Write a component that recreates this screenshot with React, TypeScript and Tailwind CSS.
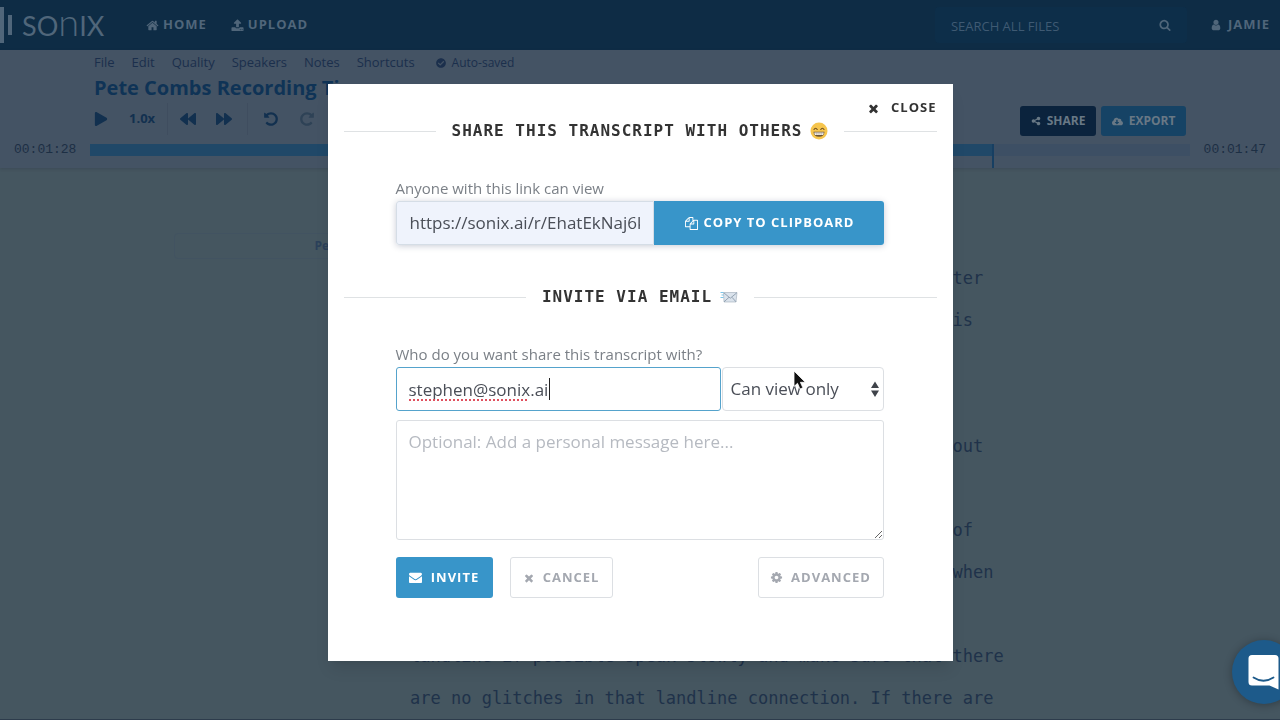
import type { ReactNode } from "react";
import { FaBackward, FaCheckCircle, FaCloudDownloadAlt, FaForward, FaPlay } from "react-icons/fa";

const paths = {
  home: "M1472 992v480q0 26-19 45t-45 19h-384v-384h-256v384h-384q-26 0-45-19t-19-45v-480q0-1 .5-3t.5-3l575-474 575 474q1 2 1 6zm223-69l-62 74q-8 9-21 11h-3q-13 0-21-7l-692-577-692 577q-12 8-24 7-13-2-21-11l-62-74q-8-10-7-23.5t11-21.5l719-599q32-26 76-26t76 26l244 204v-195q0-14 9-23t23-9h192q14 0 23 9t9 23v408l219 182q10 8 11 21.5t-7 23.5z",
  upload:
    "M1344 1472q0-26-19-45t-45-19-45 19-19 45 19 45 45 19 45-19 19-45zm256 0q0-26-19-45t-45-19-45 19-19 45 19 45 45 19 45-19 19-45zm128-224v320q0 40-28 68t-68 28h-1472q-40 0-68-28t-28-68v-320q0-40 28-68t68-28h427q21 56 70.5 92t110.5 36h256q61 0 110.5-36t70.5-92h427q40 0 68 28t28 68zm-325-648q-17 40-59 40h-256v448q0 26-19 45t-45 19h-256q-26 0-45-19t-19-45v-448h-256q-42 0-59-40-17-39 14-69l448-448q18-19 45-19t45 19l448 448q31 30 14 69z",
  search:
    "M1216 832q0-185-131.5-316.5t-316.5-131.5-316.5 131.5-131.5 316.5 131.5 316.5 316.5 131.5 316.5-131.5 131.5-316.5zm512 832q0 52-38 90t-90 38q-54 0-90-38l-343-342q-179 124-399 124-143 0-273.5-55.5t-225-150-150-225-55.5-273.5 55.5-273.5 150-225 225-150 273.5-55.5 273.5 55.5 225 150 150 225 55.5 273.5q0 220-124 399l343 343q37 37 37 90z",
  user: "M1536 1399q0 109-62.5 187t-150.5 78h-854q-88 0-150.5-78t-62.5-187q0-85 8.5-160.5t31.5-152 58.5-131 94-89 134.5-34.5q131 128 313 128t313-128q76 0 134.5 34.5t94 89 58.5 131 31.5 152 8.5 160.5zm-256-887q0 159-112.5 271.5t-271.5 112.5-271.5-112.5-112.5-271.5 112.5-271.5 271.5-112.5 271.5 112.5 112.5 271.5z",
  share:
    "M1344 1024q133 0 226.5 93.5t93.5 226.5-93.5 226.5-226.5 93.5-226.5-93.5-93.5-226.5q0-12 2-34l-360-180q-92 86-218 86-133 0-226.5-93.5t-93.5-226.5 93.5-226.5 226.5-93.5q126 0 218 86l360-180q-2-22-2-34 0-133 93.5-226.5t226.5-93.5 226.5 93.5 93.5 226.5-93.5 226.5-226.5 93.5q-126 0-218-86l-360 180q2 22 2 34t-2 34l360 180q92-86 218-86z",
  undo: "M1664 896q0 156-61 298t-164 245-245 164-298 61q-172 0-327-72.5t-264-204.5q-7-10-6.5-22.5t8.5-20.5l137-138q10-9 25-9 16 2 23 12 73 95 179 147t225 52q104 0 198.5-40.5t163.5-109.5 109.5-163.5 40.5-198.5-40.5-198.5-109.5-163.5-163.5-109.5-198.5-40.5q-98 0-188 35.5t-160 101.5l137 138q31 30 14 69-17 40-59 40h-448q-26 0-45-19t-19-45v-448q0-42 40-59 39-17 69 14l130 129q107-101 244.5-156.5t284.5-55.5q156 0 298 61t245 164 164 245 61 298z",
  times:
    "M1490 1322q0 40-28 68l-136 136q-28 28-68 28t-68-28l-294-294-294 294q-28 28-68 28t-68-28l-136-136q-28-28-28-68t28-68l294-294-294-294q-28-28-28-68t28-68l136-136q28-28 68-28t68 28l294 294 294-294q28-28 68-28t68 28l136 136q28 28 28 68t-28 68l-294 294 294 294q28 28 28 68z",
  files:
    "M1696 384q40 0 68 28t28 68v1216q0 40-28 68t-68 28h-960q-40 0-68-28t-28-68v-288h-544q-40 0-68-28t-28-68v-672q0-40 20-88t48-76l408-408q28-28 76-48t88-20h416q40 0 68 28t28 68v328q68-40 128-40h416zm-544 213l-299 299h299v-299zm-640-384l-299 299h299v-299zm196 647l316-316v-416h-384v416q0 40-28 68t-68 28h-416v640h512v-256q0-40 20-88t48-76zm956 804v-1152h-384v416q0 40-28 68t-68 28h-416v640h896z",
  envelope:
    "M1792 710v794q0 66-47 113t-113 47h-1472q-66 0-113-47t-47-113v-794q44 49 101 87 362 246 497 345 57 42 92.5 65.5t94.5 48 110 24.5h2q51 0 110-24.5t94.5-48 92.5-65.5q170-123 498-345 57-39 100-87zm0-294q0 79-49 151t-122 123q-376 261-468 325-10 7-42.5 31t-54 38.5-52 32.5-57.5 27-50 9h-2q-23 0-50-9t-57.5-27-52-32.5-54-38.5-42.5-31q-91-64-262-182.5t-205-142.5q-62-42-117-115.5t-55-136.5q0-78 41.5-130t118.5-52h1472q65 0 112.5 47t47.5 113z",
  cog: "M1152 896q0-106-75-181t-181-75-181 75-75 181 75 181 181 75 181-75 75-181zm512-109v222q0 12-8 23t-20 13l-185 28q-19 54-39 91 35 50 107 138 10 12 10 25t-9 23q-27 37-99 108t-94 71q-12 0-26-9l-138-108q-44 23-91 38-16 136-29 186-7 28-36 28h-222q-14 0-24.5-8.5t-11.5-21.5l-28-184q-49-16-90-37l-141 107q-10 9-25 9-14 0-25-11-126-114-165-168-7-10-7-23 0-12 8-23 15-21 51-66.5t54-70.5q-27-50-41-99l-183-27q-13-2-21-12.5t-8-23.5v-222q0-12 8-23t19-13l186-28q14-46 39-92-40-57-107-138-10-12-10-24 0-10 9-23 26-36 98.5-107.5t94.5-71.5q13 0 26 10l138 107q44-23 91-38 16-136 29-186 7-28 36-28h222q14 0 24.5 8.5t11.5 21.5l28 184q49 16 90 37l142-107q9-9 24-9 13 0 25 10 129 119 165 170 7 8 7 22 0 12-8 23-15 21-51 66.5t-54 70.5q26 50 41 98l183 28q13 2 21 12.5t8 23.5z",
};

function Icon({ name, className }: { name: keyof typeof paths; className: string }) {
  return (
    <svg viewBox="0 0 1792 1792" fill="currentColor" aria-hidden="true" className={`shrink-0 ${className}`}>
      <path d={paths[name]} />
    </svg>
  );
}

const transcript = [
  "Good morning everyone, today we are talking about better",
  "ways to record a phone interview. The first tip here is",
  "to get everyone on a good line.",
  "",
  "When you call somebody on the telephones you worry about",
  "noise, distance and the microphone they have.",
  "A mobile phone can drop phrase in the middle because of",
  "a weak signal so it is much better to ask your guest when",
  "you arrange the interview to use a",
  "landline if possible speak slowly and make sure that there",
  "are no glitches in that landline connection. If there are",
];

const menus = ["File", "Edit", "Quality", "Speakers", "Notes", "Shortcuts"];

function Header() {
  return (
    <header className="flex h-[50px] shrink-0 items-center bg-[#0e2c45] text-[13px] font-bold tracking-[1px] text-[#50667a]">
      <a href="#sonix" aria-label="Sonix" className="flex w-[146px] items-center font-normal tracking-normal">
        <span className="h-9 w-1 bg-current" />
        <span className="ml-1 h-5 w-1 bg-current" />
        <span className="mb-1 ml-[10px] font-[Lato] text-[27px] leading-5 whitespace-nowrap">
          SO<span className="text-[38px] leading-5 font-light">n</span>IX
        </span>
      </a>
      <nav className="flex items-center gap-6">
        <a href="#home" className="flex items-center gap-1">
          <Icon name="home" className="size-[13px]" />
          HOME
        </a>
        <a href="#upload" className="flex items-center gap-1">
          <Icon name="upload" className="size-[13px]" />
          UPLOAD
        </a>
      </nav>
      <label className="mr-[23px] ml-auto flex h-9 w-[252px] items-center rounded bg-[#0d2e49] px-4">
        <input
          type="text"
          aria-label="Search all files"
          placeholder="SEARCH ALL FILES"
          className="w-full min-w-0 bg-transparent pt-1 text-[13px] font-normal tracking-normal outline-none placeholder:text-[#3f5a73]"
        />
        <Icon name="search" className="size-3" />
      </label>
      <a href="#account" className="mr-[10px] flex items-center gap-1.5">
        <Icon name="user" className="size-3" />
        JAMIE
      </a>
    </header>
  );
}

function Toolbar() {
  return (
    <section className="shrink-0 bg-[#445364] pb-3 text-[#12304f] shadow-[0_1px_3px_rgba(30,45,60,0.25)]">
      <div className="flex items-end justify-between px-[94px]">
        <div>
          <div className="flex h-[25px] items-center gap-[17px] text-[13px] text-[#1b2f4c]">
            {menus.map((m) => (
              <button key={m} type="button">
                {m}
              </button>
            ))}
            <span className="ml-1 flex items-center gap-1.5 text-xs">
              <FaCheckCircle className="size-[10px]" />
              Auto-saved
            </span>
          </div>
          <h1 className="h-[27px] text-xl leading-[26px] font-bold whitespace-nowrap text-[#0f3356]">Pete Combs Recording Tips</h1>
          <div className="flex h-[34px] items-center">
            <button type="button" aria-label="Play" className="w-[35px]">
              <FaPlay className="size-[14px]" />
            </button>
            <button type="button" className="text-[13px] font-bold">
              1.0x
            </button>
            <span className="mx-3 h-8 w-px bg-[#3f4d5f]" />
            <button type="button" aria-label="Rewind" className="w-9">
              <FaBackward className="size-4" />
            </button>
            <button type="button" aria-label="Forward">
              <FaForward className="size-4" />
            </button>
            <span className="mx-[15px] h-8 w-px bg-[#3f4d5f]" />
            <button type="button" aria-label="Undo" className="w-9">
              <Icon name="undo" className="size-4" />
            </button>
            <button type="button" aria-label="Redo" className="text-[#2e4256]">
              <Icon name="undo" className="size-4 -scale-x-100" />
            </button>
          </div>
        </div>
        <div className="flex gap-[5px] text-xs font-bold text-[#687885]">
          <button type="button" className="flex h-[30px] w-[76px] items-center justify-center gap-1.5 rounded-[3px] bg-[#0b233d]">
            <Icon name="share" className="size-[10px]" />
            SHARE
          </button>
          <button type="button" className="flex h-[30px] w-[85px] items-center justify-center gap-1.5 rounded-[3px] bg-[#164365]">
            <FaCloudDownloadAlt className="size-[11px]" />
            EXPORT
          </button>
        </div>
      </div>
      <div className="mt-[7px] flex h-[13px] items-center gap-[14px] px-[14px] font-['Liberation_Mono',monospace] text-[13px] leading-3 text-[#1d2f44]">
        <span>00:01:28</span>
        <div className="flex h-3 flex-1 bg-[#3d4f64]">
          <div className="h-3 w-[82%] bg-[#204868]" />
          <div className="h-6 w-0.5 bg-[#173f62]" />
        </div>
        <span>00:01:47</span>
      </div>
    </section>
  );
}

function SectionTitle({ text, children }: { text: string; children: ReactNode }) {
  return (
    <div className="flex h-6 items-center gap-4">
      <span className="h-px flex-1 bg-[#dfe2e4]" />
      <h2 className="flex items-center gap-2 font-['DejaVu_Sans_Mono',monospace] text-base leading-6 font-bold tracking-[1px] text-[#333]">
        {text}
        {children}
      </h2>
      <span className="h-px flex-1 bg-[#dfe2e4]" />
    </div>
  );
}

function ShareDialog() {
  return (
    <div role="dialog" aria-modal="true" aria-label="Share this transcript" className="w-[625px] bg-white px-4 pt-[14px] pb-[63px] shadow-lg">
      <div className="flex justify-end">
        <button type="button" className="flex h-5 items-center gap-[11px] text-[13px] font-bold tracking-[1px] text-[#333]">
          <Icon name="times" className="size-[13px]" />
          CLOSE
        </button>
      </div>
      <div className="mt-px">
        <SectionTitle text="SHARE THIS TRANSCRIPT WITH OTHERS">
          <svg viewBox="0 0 18 18" aria-hidden="true" className="size-[18px]">
            <circle cx="9" cy="9" r="8.5" fill="#f6c54d" />
            <path d="M4 7.5q1.5-2.6 3.2 0M10.800 7.500q1.600-2.600 3.200 0" fill="none" stroke="#6b4a1f" strokeWidth="1.100" strokeLinecap="round" />
            <path d="M3.500 9.800h11q-.3 5-5.500 5t-5.500-5z" fill="#6b5434" />
            <path d="M4.300 10.500h9.400q0 1.900-.8 2.500h-7.800q-.8-.8-.8-2.500z" fill="#fff" />
            <path d="M4.500 11.800h9M6.800 10.500v2.500M9 10.500v2.500M11.200 10.500v2.500" stroke="#97836a" strokeWidth=".4" />
          </svg>
        </SectionTitle>
      </div>
      <div className="mt-[35px] pr-[53px] pl-[52px]">
        <label htmlFor="link" className="mb-[3px] block h-5 text-[15px] leading-5 text-[#7b8087]">
          Anyone with this link can view
        </label>
        <div className="flex h-11 rounded-[3px] shadow-[0_1px_6px_rgba(40,50,90,0.25)]">
          <input
            id="link"
            type="text"
            readOnly
            defaultValue="https://sonix.ai/r/EhatEkNaj6kQ7vMzT2"
            className="min-w-0 flex-1 rounded-l-[3px] border border-[#d5dde6] bg-[#eff3fc] px-[13px] text-[17px] text-[#4a4e57] outline-none"
          />
          <button type="button" className="flex w-[230px] items-center justify-center gap-1.5 rounded-r-[3px] bg-[#3895c9] pl-0.5 text-[13px] font-bold tracking-[1px] text-white">
            <Icon name="files" className="size-[13px]" />
            COPY TO CLIPBOARD
          </button>
        </div>
      </div>
      <div className="mt-10">
        <SectionTitle text="INVITE VIA EMAIL">
          <svg viewBox="0 0 18 12" aria-hidden="true" className="h-3 w-[18px]">
            <path d="M3.500 1.500h13.500l-1 9.500h-12z" fill="#dbe3ec" stroke="#9eabb9" strokeWidth=".6" />
            <path d="M4 10.800l5-4.500M16 10.800l-4-4.500M3.800 1.800l6.500 5.400 6.500-5.400" fill="none" stroke="#8293a5" strokeWidth=".8" />
            <path d="M.5 1.500h3M1.500 4h2M.5 6.500h3" stroke="#6fbfe6" strokeWidth=".9" />
          </svg>
        </SectionTitle>
      </div>
      <form className="mt-[35px] pr-[53px] pl-[52px]">
        <label htmlFor="email" className="mb-[3px] block h-5 text-[15px] leading-5 text-[#7b8087]">
          Who do you want share this transcript with?
        </label>
        <div className="flex gap-px">
          <div className="relative h-11 flex-1">
            <input
              id="email"
              type="text"
              spellCheck={false}
              defaultValue="stephen@sonix.ai"
              className="h-11 w-full rounded-[3px] border border-[#55a3cc] bg-white px-3 text-[17px] text-[#4a4e57] outline-none"
            />
            <span className="absolute top-8 left-[13px] w-[118px] border-b-2 border-dotted border-[#e0505f]" />
            <span className="absolute top-[11px] left-[153px] h-[22px] w-px bg-[#222]" />
          </div>
          <div className="relative h-11 w-[162px]">
            <select
              aria-label="Permission"
              className="h-11 w-full appearance-none rounded-[4px] border border-[#dcdfe3] bg-white px-2 text-[17px] text-[#4a4e57] outline-none"
            >
              <option>Can view only</option>
            </select>
            <svg viewBox="0 0 8 16" aria-hidden="true" className="pointer-events-none absolute top-[14px] right-[5px] h-4 w-2" fill="#3f434a">
              <path d="M0 7l4-6.500L8 7zM0 9.500h8l-4 6.500z" />
            </svg>
            <svg viewBox="0 0 14 21" aria-hidden="true" className="pointer-events-none absolute top-[3px] left-[71px] h-[21px] w-[14px]">
              <path d="M1 1v15.500l3.500-3.200 2.500 5.700 2.900-1.200-2.500-5.500h4.900z" fill="#111" stroke="#fff" strokeWidth=".8" />
            </svg>
          </div>
        </div>
        <textarea
          aria-label="Personal message"
          placeholder="Optional: Add a personal message here..."
          className="mt-[9px] block h-[120px] w-full resize rounded-[3px] border border-[#dcdfe3] px-3 py-2 text-[17px] leading-[26px] outline-none placeholder:text-[#b6bac1]"
        />
        <div className="mt-[17px] flex h-[41px] text-[13px] font-bold tracking-[1px] text-[#a4a8b0]">
          <button type="button" className="flex w-[97px] items-center justify-center gap-[9px] rounded-[3px] bg-[#3895c9] text-white">
            <Icon name="envelope" className="size-[13px]" />
            INVITE
          </button>
          <button type="button" className="ml-[17px] flex w-[103px] items-center justify-center gap-2 rounded-[3px] border border-[#dcdfe3]">
            <Icon name="times" className="size-3" />
            CANCEL
          </button>
          <button type="button" className="ml-auto flex w-[126px] items-center justify-center gap-2 rounded-[3px] border border-[#dcdfe3]">
            <Icon name="cog" className="size-[13px]" />
            ADVANCED
          </button>
        </div>
      </form>
    </div>
  );
}

export default function App() {
  return (
    <div className="flex h-screen flex-col overflow-hidden bg-[#455660] font-['Open_Sans',sans-serif]">
      <Header />
      <Toolbar />
      <main className="flex min-h-0 flex-1 overflow-hidden border-b border-[#2d3c4c] pt-[65px]">
        <div className="ml-[174px] flex h-[26px] w-[216px] shrink-0 items-center justify-end rounded border border-[#425361] pr-1 text-xs font-bold text-[#2b405a]">
          Pete Combs
        </div>
        <div className="mt-[24px] ml-5 font-['DejaVu_Sans_Mono',monospace] text-[17px] leading-[42px] whitespace-pre text-[#1f324a]">
          {transcript.map((line, i) => (
            <p key={i} className="h-[42px]">
              {line}
            </p>
          ))}
        </div>
      </main>
      <div className="fixed inset-0 flex items-start justify-center pt-[84px]">
        <ShareDialog />
      </div>
      <button type="button" aria-label="Open chat" className="fixed right-[-16px] bottom-4 flex size-16 items-center rounded-full bg-[#1d5a8a] pl-4 shadow-[0_1px_8px_rgba(0,0,0,0.3)]">
        <svg viewBox="0 0 32 36" aria-hidden="true" className="h-9 w-8">
          <path d="M4 1h23q3.500 0 3.500 3.500v31l-9-4h-17.500q-3.500 0-3.500-3.500v-23.500q0-3.500 3.500-3.500z" fill="#fff" />
          <path d="M5.500 23.500q10 6.500 20 0" fill="none" stroke="#1d5a8a" strokeWidth="1.800" strokeLinecap="round" />
        </svg>
      </button>
    </div>
  );
}
